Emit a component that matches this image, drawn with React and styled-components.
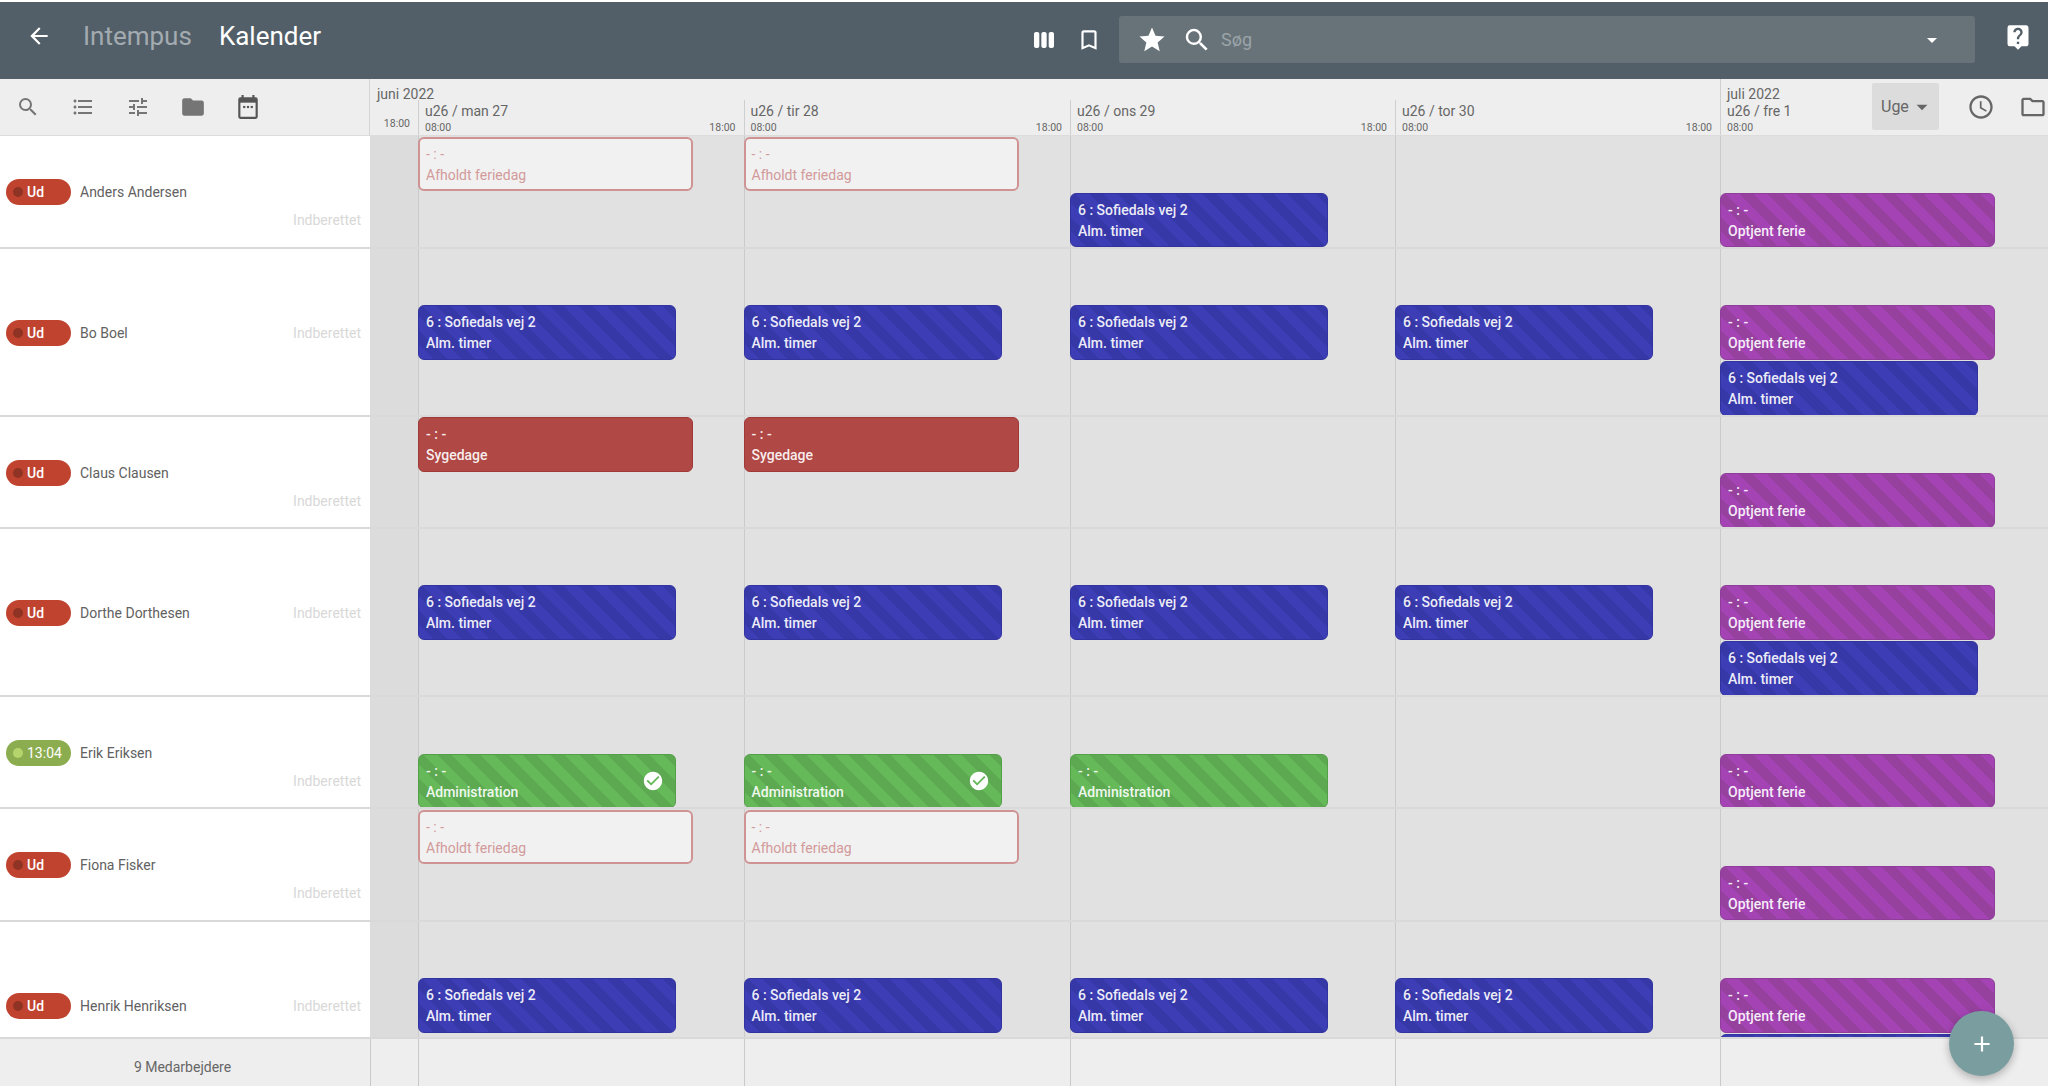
import React from 'react';
import styled, { createGlobalStyle, css } from 'styled-components';
import {
  MdAccessTime, MdAdd, MdArrowBack, MdArrowDropDown, MdBookmarkBorder, MdCheckCircle, MdFolder,
  MdFormatListBulleted, MdLiveHelp, MdOutlineFolder, MdSearch, MdStar, MdTune, MdViewWeek,
} from 'react-icons/md';

const GlobalStyle = createGlobalStyle`
  html, body {
    margin: 0;
    height: 100%;
    overflow: hidden;
    background: #fff;
    font-family: Roboto, "Liberation Sans", sans-serif;
  }
`;

const columns = css`
  display: grid;
  grid-template-columns: 370px 48px 325.5px 326.5px 325px 325px 1fr;
`;

const Page = styled.div`
  position: relative;
  width: 2048px;
  height: 1086px;
  overflow: hidden;
  padding-top: 2px;
  box-sizing: border-box;
`;

const AppBar = styled.header`
  display: flex;
  align-items: center;
  height: 77px;
  padding: 0 16px 2px 26px;
  box-sizing: border-box;
  background: #525f68;
  color: #fff;
`;

const BarTitles = styled.div`
  display: flex;
  align-items: center;
  margin-bottom: 7px;
`;

const Title = styled.h1`
  margin: 0 0 0 ${({ $muted }) => ($muted ? 31 : 27)}px;
  font-size: 26px;
  font-weight: 400;
  color: ${({ $muted }) => ($muted ? '#a3abb0' : '#fff')};
`;

const BarActions = styled.div`
  display: flex;
  align-items: center;
  margin-left: auto;
`;

const BookmarkIcon = styled(MdBookmarkBorder)`
  margin-left: 20px;
`;

const HelpIcon = styled(MdLiveHelp)`
  margin-bottom: 5px;
`;

const SearchIcon = styled(MdSearch)`
  margin-left: 15px;
`;

const SearchBar = styled.div`
  display: flex;
  align-items: center;
  width: 856px;
  height: 47px;
  margin: 0 29px 0 17px;
  padding: 0 31px 0 18px;
  box-sizing: border-box;
  border-radius: 3px;
  background: #687379;
`;

const SearchText = styled.span`
  flex: 1;
  margin-left: 9px;
  font-size: 18px;
  color: #9aa3a8;
`;

const HeadRow = styled.div`
  ${columns}
  height: 57px;
  border-bottom: 1px solid #dcdcdc;
  box-sizing: border-box;
  background: #eee;
  color: #666;
`;

const Tools = styled.div`
  display: grid;
  grid-template-columns: repeat(5, 55px);
  align-items: center;
  justify-items: center;
  border-right: 1px solid #d4d4d4;
  color: #757575;
`;

const GapHead = styled.div`
  display: flex;
  flex-direction: column;
  justify-content: space-between;
  padding: 7px 8px 4px 7px;
  white-space: nowrap;
`;

const Month = styled.div`
  font-size: 14px;
  line-height: 16px;
`;

const Clock = styled.span`
  font-size: 10.5px;
  line-height: 14px;
`;

const DayHead = styled.div`
  display: flex;
  margin-top: ${({ $month }) => ($month ? 0 : 21)}px;
  padding: ${({ $month }) => ($month ? '7px 1px 0 6px' : '2px 8px 0 6px')};
  box-sizing: border-box;
  border-left: 1px solid #cfcfcf;
`;

const DayLabels = styled.div`
  flex: 1;
`;

const DayName = styled.div`
  font-size: 14px;
  line-height: 18px;
`;

const ClockRow = styled.div`
  display: flex;
  justify-content: ${({ $end }) => ($end ? 'flex-end' : 'space-between')};
  margin-top: ${({ $end }) => ($end ? 0 : 1)}px;
`;

const ViewControls = styled.div`
  display: flex;
  align-items: center;
  align-self: flex-start;
  gap: 24px;
  margin-top: -3px;
  color: #666;
`;

const ViewSelect = styled.div`
  display: flex;
  align-items: center;
  width: 67px;
  height: 47px;
  margin-right: 4px;
  padding-left: 9px;
  box-sizing: border-box;
  border-radius: 2px;
  background: #dcdcdc;
  font-size: 16px;
`;

const Row = styled.div`
  ${columns}
  height: ${({ $height }) => $height}px;
  box-sizing: border-box;
  border-bottom: 2px solid #d9d9d9;
  overflow: hidden;
`;

const PersonCell = styled.div`
  display: grid;
  grid-template-columns: 1fr;
  align-items: start;
  background: #fff;
`;

const Identity = styled.div`
  grid-area: 1 / 1;
  display: flex;
  align-items: center;
  height: ${({ $lanes }) => $lanes * 56 - 1}px;
  padding-left: 6px;
`;

const Pill = styled.span`
  display: flex;
  align-items: center;
  gap: 4px;
  width: 65px;
  height: 26px;
  padding-left: 7px;
  box-sizing: border-box;
  border-radius: 13px;
  background: ${({ $in }) => ($in ? '#8cad4f' : '#c0432f')};
  color: #fff;
  font-size: 14px;
  font-weight: ${({ $in }) => ($in ? 400 : 500)};

  &::before {
    content: '';
    width: 10px;
    height: 10px;
    border-radius: 50%;
    background: ${({ $in }) => ($in ? '#b5d46b' : '#8f3325')};
  }
`;

const Name = styled.span`
  margin-left: 9px;
  font-size: 14px;
  color: #616161;
`;

const Reported = styled.span`
  grid-area: 1 / 1;
  justify-self: end;
  margin: 75px 9px 0 0;
  font-size: 14px;
  line-height: 18px;
  color: #d8d8d8;
`;

const GapCell = styled.div`
  background: #dcdcdc;
`;

const DayCell = styled.div`
  position: relative;
  display: grid;
  grid-auto-rows: 56px;
  align-content: start;
  justify-items: start;
  padding-top: ${({ $pad }) => $pad}px;
  box-sizing: border-box;
  border-left: 1px solid #cacaca;
  background: #e1e1e1;
`;

const stripes = (a, b) => `repeating-linear-gradient(45deg, ${a} 0 10px, ${b} 10px 20px)`;

const eventKinds = {
  leave: css`
    width: 275px;
    background: #f1f1f1;
    border: 2px solid #cf9393;
    color: #d29a9a;
    font-weight: 400;
    padding: 5px 6px;
  `,
  sick: css`
    width: 275px;
    background: #b04845;
    border: 1px solid #a03a38;
  `,
  work: css`
    width: 258px;
    background: ${stripes('#3d3eb6', '#3738a8')};
    border: 1px solid #3233a0;
  `,
  holiday: css`
    width: 275px;
    background: ${stripes('#a444b4', '#97419f')};
    border: 1px solid #8f3c9b;
  `,
  admin: css`
    width: 258px;
    background: ${stripes('#65b958', '#5ca951')};
    border: 1px solid #54a049;
  `,
};

const Event = styled.div`
  position: relative;
  grid-row: ${({ $lane }) => $lane};
  height: ${({ $height }) => $height}px;
  margin-left: -1px;
  padding: 6px 7px;
  box-sizing: border-box;
  border-radius: 6px;
  color: rgba(255, 255, 255, 0.92);
  font-size: 14px;
  font-weight: 500;
  line-height: 21px;
  ${({ $kind }) => eventKinds[$kind]}
`;

const CheckMark = styled.span`
  position: absolute;
  right: 11px;
  top: 15px;
  display: flex;
  color: #fff;
`;

// tiny edge of an event that is clipped by the row below it
const ClippedEdge = styled.span`
  position: absolute;
  left: ${({ $left }) => $left}px;
  bottom: 0;
  width: ${({ $width }) => $width}px;
  height: 1px;
  background: ${({ $color }) => $color};
`;

const Footer = styled.div`
  ${columns}
  height: 47px;
  background: #eee;
`;

const FooterCount = styled.div`
  padding: 19px 5px 0 0;
  text-align: center;
  font-size: 14px;
  line-height: 18px;
  color: #666;
`;

const FooterDay = styled.div`
  border-left: 1px solid #cacaca;
`;

const Fab = styled.button`
  position: absolute;
  right: 34px;
  bottom: 10px;
  display: flex;
  align-items: center;
  justify-content: center;
  width: 65px;
  height: 65px;
  padding: 0;
  border: 0;
  border-radius: 50%;
  background: #7a9e9f;
  color: #fff;
  box-shadow: 0 3px 8px rgba(0, 0, 0, 0.28);
`;

function CalendarIcon() {
  return (
    <svg width="26" height="26" viewBox="0 0 24 24" aria-hidden="true">
      <path fill="#555" d="M6 1h2v2h8V1h2v2h1a2 2 0 0 1 2 2v16a2 2 0 0 1-2 2H5a2 2 0 0 1-2-2V5a2 2 0 0 1 2-2h1z" />
      <rect x="5" y="8" width="14" height="13" fill="#eee" />
      <rect x="7.5" y="11" width="2" height="2" fill="#555" />
      <rect x="11" y="11" width="2" height="2" fill="#555" />
      <rect x="14.5" y="11" width="2" height="2" fill="#555" />
    </svg>
  );
}

const work = (lane) => ({ kind: 'work', lane, top: '6 : Sofiedals vej 2', label: 'Alm. timer' });
const clippedWork = (lane) => ({ kind: 'work', lane });
const holiday = (lane) => ({ kind: 'holiday', lane, top: '- : -', label: 'Optjent ferie' });
const leave = (lane) => ({ kind: 'leave', lane, top: '- : -', label: 'Afholdt feriedag' });
const sick = (lane) => ({ kind: 'sick', lane, top: '- : -', label: 'Sygedage' });
const admin = (lane, checked) => ({ kind: 'admin', lane, top: '- : -', label: 'Administration', checked });

const staffRows = [
  {
    name: 'Anders Andersen', height: 113, lanes: 2, pad: 1, eventHeight: 54,
    days: [[leave(1)], [leave(1)], [work(2)], [], [holiday(2)]],
    edges: { 4: { left: 232, width: 23, color: '#6a6fce' } },
  },
  {
    name: 'Bo Boel', height: 168, lanes: 3, pad: 0, eventHeight: 55,
    days: [[work(2)], [work(2)], [work(2)], [work(2)], [holiday(2), work(3)]],
  },
  {
    name: 'Claus Clausen', height: 112, lanes: 2, pad: 0, eventHeight: 55,
    days: [[sick(1)], [sick(1)], [], [], [holiday(2)]],
    edges: {
      0: { left: 4, width: 250, color: '#b3b3d6' },
      1: { left: 4, width: 250, color: '#b3b3d6' },
      2: { left: 4, width: 250, color: '#b3b3d6' },
      3: { left: 4, width: 250, color: '#b3b3d6' },
    },
  },
  {
    name: 'Dorthe Dorthesen', height: 168, lanes: 3, pad: 0, eventHeight: 55,
    days: [[work(2)], [work(2)], [work(2)], [work(2)], [holiday(2), work(3)]],
  },
  {
    name: 'Erik Eriksen', height: 112, lanes: 2, pad: 1, eventHeight: 54, clockedIn: '13:04',
    days: [[admin(2, true)], [admin(2, true)], [admin(2)], [], [holiday(2)]],
  },
  {
    name: 'Fiona Fisker', height: 113, lanes: 2, pad: 1, eventHeight: 54,
    days: [[leave(1)], [leave(1)], [], [], [holiday(2)]],
  },
  {
    name: 'Henrik Henriksen', height: 117, lanes: 3, pad: 0, eventHeight: 55,
    days: [[work(2)], [work(2)], [work(2)], [work(2)], [holiday(2), clippedWork(3)]],
  },
];

const dayHeads = [
  { name: 'u26 / man 27' },
  { name: 'u26 / tir 28' },
  { name: 'u26 / ons 29' },
  { name: 'u26 / tor 30' },
];

function StaffRow({ row }) {
  return (
    <Row $height={row.height}>
      <PersonCell>
        <Identity $lanes={row.lanes}>
          <Pill $in={Boolean(row.clockedIn)}>{row.clockedIn || 'Ud'}</Pill>
          <Name>{row.name}</Name>
        </Identity>
        <Reported>Indberettet</Reported>
      </PersonCell>
      <GapCell />
      {row.days.map((events, day) => (
        <DayCell key={day} $pad={row.pad}>
          {events.map((event) => (
            <Event key={event.lane} $kind={event.kind} $lane={event.lane} $height={row.eventHeight}>
              <div>{event.top}</div>
              <div>{event.label}</div>
              {event.checked && (
                <CheckMark><MdCheckCircle size={22} /></CheckMark>
              )}
            </Event>
          ))}
          {row.edges && row.edges[day] && (
            <ClippedEdge
              $left={row.edges[day].left}
              $width={row.edges[day].width}
              $color={row.edges[day].color}
            />
          )}
        </DayCell>
      ))}
    </Row>
  );
}

export default function App() {
  return (
    <Page>
      <GlobalStyle />
      <AppBar>
        <BarTitles>
          <MdArrowBack size={26} />
          <Title $muted>Intempus</Title>
          <Title>Kalender</Title>
        </BarTitles>
        <BarActions>
          <MdViewWeek size={24} />
          <BookmarkIcon size={26} />
          <SearchBar>
            <MdStar size={30} />
            <SearchIcon size={30} />
            <SearchText>Søg</SearchText>
            <MdArrowDropDown size={24} />
          </SearchBar>
          <HelpIcon size={28} />
        </BarActions>
      </AppBar>

      <HeadRow>
        <Tools>
          <MdSearch size={24} />
          <MdFormatListBulleted size={24} />
          <MdTune size={24} />
          <MdFolder size={26} />
          <CalendarIcon />
        </Tools>
        <GapHead>
          <Month>juni 2022</Month>
          <ClockRow $end><Clock>18:00</Clock></ClockRow>
        </GapHead>
        {dayHeads.map((day) => (
          <DayHead key={day.name}>
            <DayLabels>
              <DayName>{day.name}</DayName>
              <ClockRow><Clock>08:00</Clock><Clock>18:00</Clock></ClockRow>
            </DayLabels>
          </DayHead>
        ))}
        <DayHead $month>
          <DayLabels>
            <Month>juli 2022</Month>
            <DayName>u26 / fre 1</DayName>
            <ClockRow><Clock>08:00</Clock></ClockRow>
          </DayLabels>
          <ViewControls>
            <ViewSelect>Uge<MdArrowDropDown size={26} /></ViewSelect>
            <MdAccessTime size={28} />
            <MdOutlineFolder size={28} />
          </ViewControls>
        </DayHead>
      </HeadRow>

      {staffRows.map((row) => <StaffRow key={row.name} row={row} />)}

      <Footer>
        <FooterCount>9 Medarbejdere</FooterCount>
        <FooterDay />
        <FooterDay />
        <FooterDay />
        <FooterDay />
        <FooterDay />
        <FooterDay />
      </Footer>

      <Fab aria-label="Tilføj"><MdAdd size={26} /></Fab>
    </Page>
  );
}
